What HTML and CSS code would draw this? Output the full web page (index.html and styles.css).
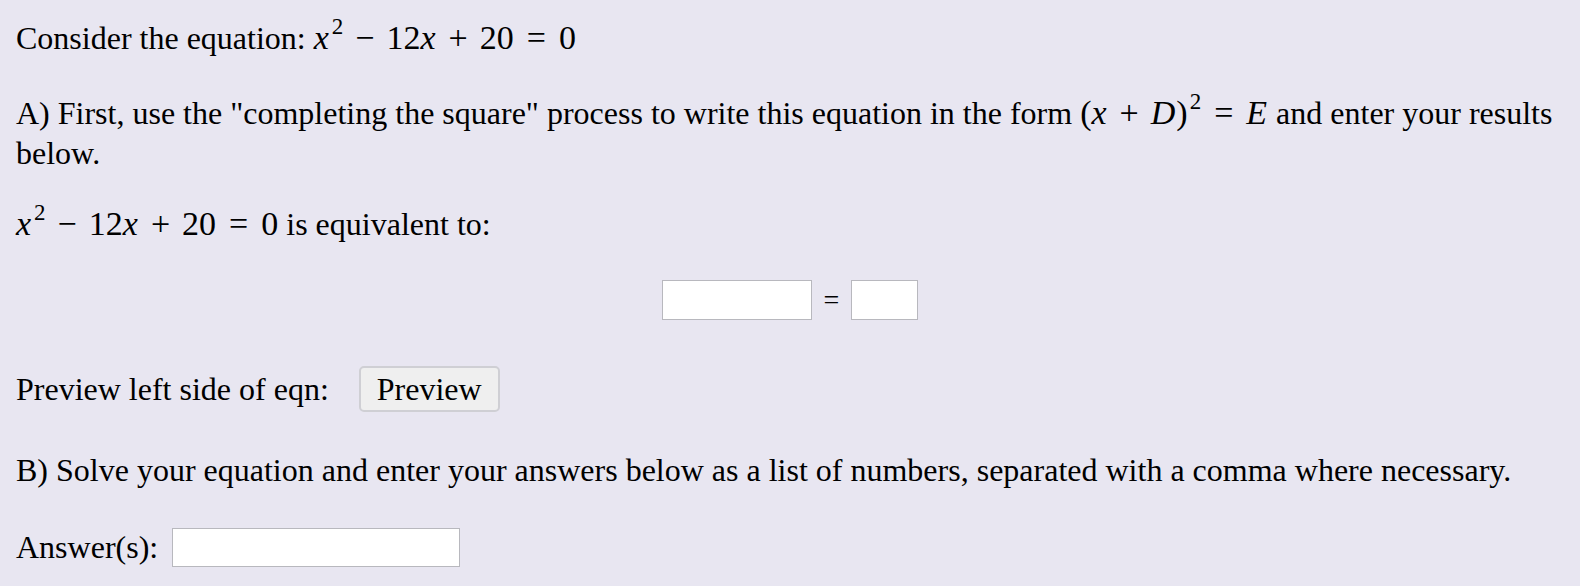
FILE: index.html
```html
<!DOCTYPE html>
<html lang="en">
<head>
    <meta charset="UTF-8">
    <title>Completing the square</title>
    <link rel="stylesheet" href="styles.css">
</head>
<body>

    <p class="intro">Consider the equation: <span class="math"><i>x</i><sup>2</sup><span class="bin">&minus;</span>12<i>x</i><span class="bin">+</span>20<span class="rel">=</span>0</span></p>

    <p class="part">A) First, use the "completing the square" process to write this equation in the form <span class="math">(<i>x</i><span class="bin">+</span><i>D</i>)<sup>2</sup><span class="rel">=</span><i>E</i></span> and enter your results below.</p>

    <p class="equiv"><span class="math"><i>x</i><sup>2</sup><span class="bin">&minus;</span>12<i>x</i><span class="bin">+</span>20<span class="rel">=</span>0</span> is equivalent to:</p>

    <div class="answer-row">
        <input type="text" class="box left-side">
        <span class="eq">=</span>
        <input type="text" class="box right-side">
    </div>

    <div class="preview-row">
        <span>Preview left side of eqn:</span>
        <button class="preview-btn">Preview</button>
    </div>

    <p class="part-b">B) Solve your equation and enter your answers below as a list of numbers, separated with a comma where necessary.</p>

    <div class="answers">
        <label for="answers">Answer(s):</label>
        <input type="text" id="answers" class="box answers-box">
    </div>

</body>
</html>
```

FILE: styles.css
```css
body {
    margin: 0;
    padding: 0 16px;
    background-color: #e8e6f1;
    color: #000;
    font-family: "Liberation Serif", "Times New Roman", serif;
    font-size: 32px;
    line-height: 40px;
}

p {
    margin: 0;
}

.math {
    white-space: nowrap;
    font-size: 34px;
}

.math i {
    font-style: italic;
    padding-right: 1px;
}

.math sup {
    font-size: 23px;
    line-height: 0;
    vertical-align: 15px;
    margin-left: 2px;
}

.bin {
    margin: 0 12px;
}

.rel {
    margin: 0 13px;
}

.intro {
    margin-top: 18px;
}

.part {
    margin-top: 35px;
}

.equiv {
    margin-top: 31px;
}

.answer-row {
    display: flex;
    justify-content: center;
    align-items: center;
    gap: 12px;
    margin-top: 36px;
}

.box {
    box-sizing: border-box;
    height: 40px;
    background: #fff;
    border: 1px solid #b8b8be;
    border-radius: 0;
    padding: 0 6px;
    font: inherit;
}

.left-side {
    width: 150px;
}

.right-side {
    width: 67px;
}

.eq {
    font-size: 28px;
}

.preview-row {
    display: flex;
    align-items: center;
    gap: 30px;
    margin-top: 46px;
}

.preview-btn {
    height: 46px;
    padding: 0 16px;
    font: inherit;
    background-color: #efefef;
    border: 2px solid #cfcfd4;
    border-radius: 5px;
    color: #000;
}

.part-b {
    margin-top: 38px;
}

.answers {
    display: flex;
    align-items: center;
    gap: 14px;
    margin-top: 37px;
}

.answers-box {
    width: 288px;
    height: 39px;
}
```
